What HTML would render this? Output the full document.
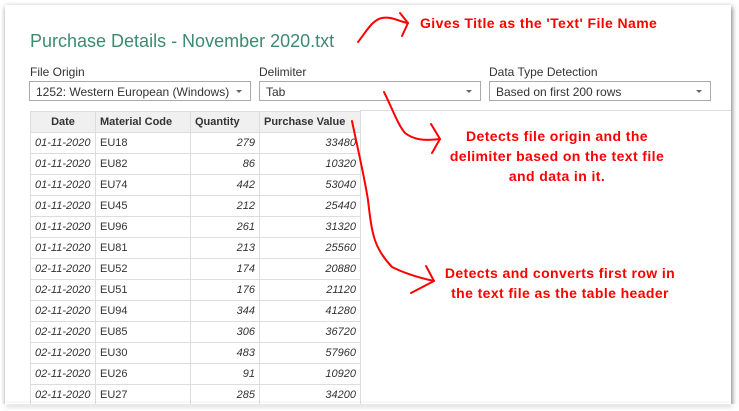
<!DOCTYPE html>
<html><head><style>
body{margin:0;width:739px;height:411px;background:#fff;position:relative;overflow:hidden;font-family:"Liberation Sans",sans-serif}
.panel{position:absolute;left:5px;top:5px;width:726px;height:399px;background:#fff;box-shadow:1px 2px 5px rgba(0,0,0,.55)}
.t{position:absolute;white-space:nowrap}
.title{left:30px;top:31px;font-size:18px;color:#3c8a6f;font-weight:300}
.lbl{font-size:12px;color:#333;top:65px}
.dd{position:absolute;top:81px;height:20px;border:1px solid #aaa;background:#fff;font-size:12px;color:#333;line-height:20px;padding-left:6px;box-sizing:border-box}
.dd:after{content:"";position:absolute;right:8px;top:8px;border-left:3px solid transparent;border-right:3px solid transparent;border-top:3px solid #666}
table{position:absolute;left:30px;top:111px;border-collapse:collapse;font-size:11px;color:#333}
td,th{border:1px solid #ddd;height:21px;padding:0 4px;box-sizing:border-box}
th{background:#f0f0f0;text-align:left;font-weight:bold;height:21px}
td.i{font-style:italic}
td.r{text-align:right;font-style:italic}
.red{color:#f00;font-weight:bold;font-size:14px;letter-spacing:0.4px;text-align:center;line-height:20px}
</style></head><body>
<div class="panel"></div>
<div class="t title">Purchase Details - November 2020.txt</div>
<div class="t lbl" style="left:30px">File Origin</div>
<div class="t lbl" style="left:259px">Delimiter</div>
<div class="t lbl" style="left:489px">Data Type Detection</div>
<div class="dd" style="left:29px;width:222px">1252: Western European (Windows)</div>
<div class="dd" style="left:259px;width:222px">Tab</div>
<div class="dd" style="left:489px;width:222px">Based on first 200 rows</div>
<div style="position:absolute;left:360px;top:110px;width:371px;height:1px;background:#ddd"></div>
<table>
<tr><th style="width:65px;text-align:center">Date</th><th style="width:95px">Material Code</th><th style="width:69px">Quantity</th><th style="width:101px">Purchase Value</th></tr>
<tr><td class="i">01-11-2020</td><td>EU18</td><td class="r">279</td><td class="r">33480</td></tr>
<tr><td class="i">01-11-2020</td><td>EU82</td><td class="r">86</td><td class="r">10320</td></tr>
<tr><td class="i">01-11-2020</td><td>EU74</td><td class="r">442</td><td class="r">53040</td></tr>
<tr><td class="i">01-11-2020</td><td>EU45</td><td class="r">212</td><td class="r">25440</td></tr>
<tr><td class="i">01-11-2020</td><td>EU96</td><td class="r">261</td><td class="r">31320</td></tr>
<tr><td class="i">01-11-2020</td><td>EU81</td><td class="r">213</td><td class="r">25560</td></tr>
<tr><td class="i">02-11-2020</td><td>EU52</td><td class="r">174</td><td class="r">20880</td></tr>
<tr><td class="i">02-11-2020</td><td>EU51</td><td class="r">176</td><td class="r">21120</td></tr>
<tr><td class="i">02-11-2020</td><td>EU94</td><td class="r">344</td><td class="r">41280</td></tr>
<tr><td class="i">02-11-2020</td><td>EU85</td><td class="r">306</td><td class="r">36720</td></tr>
<tr><td class="i">02-11-2020</td><td>EU30</td><td class="r">483</td><td class="r">57960</td></tr>
<tr><td class="i">02-11-2020</td><td>EU26</td><td class="r">91</td><td class="r">10920</td></tr>
<tr><td class="i">02-11-2020</td><td>EU27</td><td class="r">285</td><td class="r">34200</td></tr>
</table>
<div style="position:absolute;left:0;top:404px;width:739px;height:7px;background:#fff"></div>
<div style="position:absolute;left:5px;top:403px;width:726px;height:1px;box-shadow:1px 2px 4px rgba(0,0,0,.5)"></div>
<div class="t red" style="left:420px;top:13px">Gives Title as the 'Text' File Name</div>
<div class="t red" style="left:437px;top:126px;width:240px">Detects file origin and the<br>delimiter based on the text file<br>and data in it.</div>
<div class="t red" style="left:440px;top:263px;width:240px">Detects and converts first row in<br>the text file as the table header</div>
<svg width="739" height="411" style="position:absolute;left:0;top:0" fill="none" stroke="#f00" stroke-width="2" stroke-linecap="round" stroke-linejoin="round">
<path d="M358,42 C366,32 372,20 382,18 C392,16 400,22 408,23"/>
<path d="M400,13 L408,23 L402,36"/>
<path d="M384,92 C392,108 398,125 405,133 C414,140 425,141 440,139"/>
<path d="M431,124 L440,139 L432,153"/>
<path d="M352,121 C358,150 364,175 368,200 C372,235 374,248 392,267 C406,274 420,278 434,281"/>
<path d="M426,266 L434,281 L411,293"/>
</svg>
</body></html>
